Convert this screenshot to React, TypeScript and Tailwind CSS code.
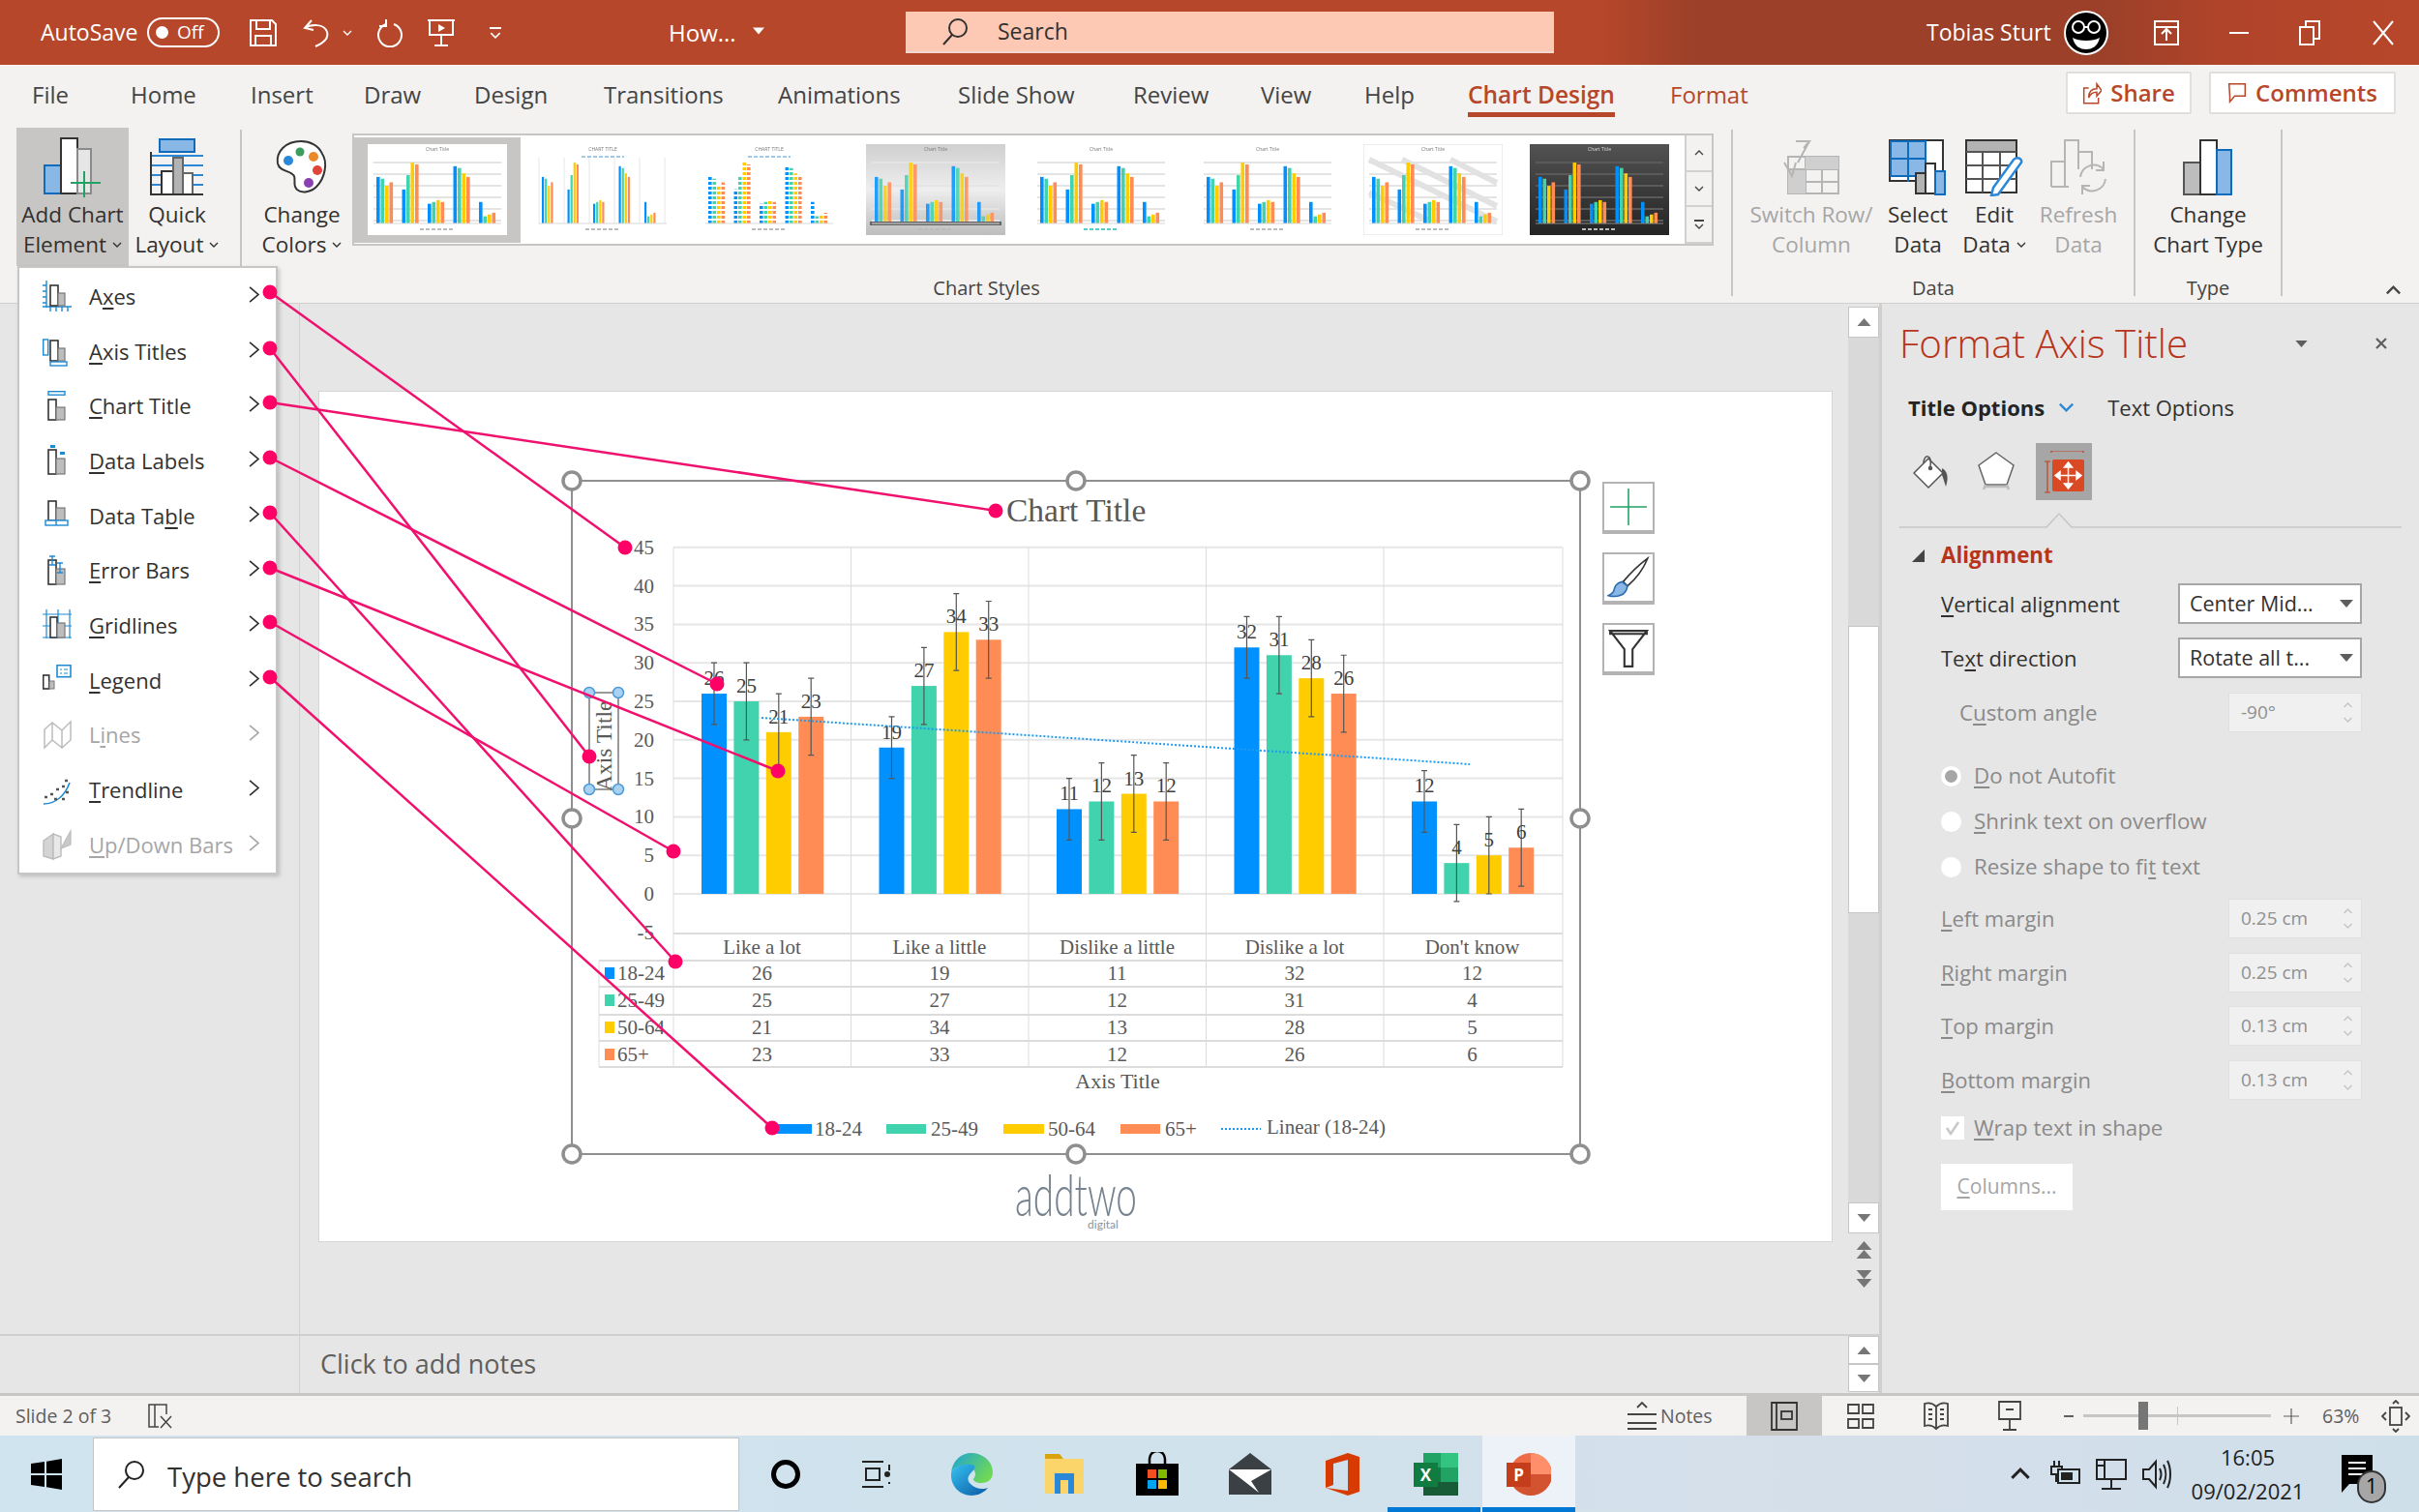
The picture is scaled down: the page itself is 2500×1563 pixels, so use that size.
import type { ReactNode } from "react";

// data behind the chart and the gallery thumbnails
const SERIES = ["18-24", "25-49", "50-64", "65+"];
const COLORS = ["#0091ff", "#41d2ae", "#ffcc00", "#ff8c55"];
const CATS = ["Like a lot", "Like a little", "Dislike a little", "Dislike a lot", "Don't know"];
const DATA = [
  [26, 25, 21, 23],
  [19, 27, 34, 33],
  [11, 12, 13, 12],
  [32, 31, 28, 26],
  [12, 4, 5, 6],
];
const CAT_X = [696, 879.5, 1063, 1246.5, 1430];

const TABS = [
  { label: "File", w: "w-[102px]" },
  { label: "Home", w: "w-[124px]" },
  { label: "Insert", w: "w-[117px]" },
  { label: "Draw", w: "w-[114px]" },
  { label: "Design", w: "w-[134px]" },
  { label: "Transitions", w: "w-[180px]" },
  { label: "Animations", w: "w-[186px]" },
  { label: "Slide Show", w: "w-[181px]" },
  { label: "Review", w: "w-[132px]" },
  { label: "View", w: "w-[107px]" },
  { label: "Help", w: "w-[107px]" },
];

const ANNOTATIONS = [
  [279, 302, 646, 566],
  [279, 360, 609, 782],
  [279, 416, 1029, 528],
  [279, 473, 741, 707],
  [279, 530, 698, 994],
  [279, 587, 804, 797],
  [279, 643, 696, 880],
  [279, 700, 798, 1166],
];

function Acc({ text, at }: { text: string; at: number }) {
  return (
    <>
      {text.slice(0, at)}
      <u className="underline-offset-[3px]">{text[at]}</u>
      {text.slice(at + 1)}
    </>
  );
}

function Tri({ className }: { className: string }) {
  return (
    <svg viewBox="0 0 14 8" className={className}>
      <path d="M0 0h14L7 8z" fill="currentColor" />
    </svg>
  );
}

function Chev({ className }: { className: string }) {
  return (
    <svg viewBox="0 0 10 6" className={className} fill="none" stroke="currentColor" strokeWidth="1.4">
      <path d="M1 1l4 4 4-4" />
    </svg>
  );
}

/* ---------- title bar icons ---------- */
function SaveIcon() {
  return (
    <svg viewBox="0 0 30 30" className="w-[30px] h-[30px]" fill="none" stroke="white" strokeWidth="2">
      <path d="M2 2h22l4 4v22H2z" />
      <path d="M8 2v9h14V2M7 28V18h16v10" />
    </svg>
  );
}
function UndoIcon() {
  return (
    <svg viewBox="0 0 30 30" className="w-[30px] h-[30px]" fill="none" stroke="white" strokeWidth="2">
      <path d="M10 2L3 10l9 2M3 10c6-4 20-5 23 4 2 7-5 12-12 15" />
    </svg>
  );
}
function RedoIcon() {
  return (
    <svg viewBox="0 0 30 30" className="w-[30px] h-[30px]" fill="none" stroke="white" strokeWidth="2">
      <path d="M11 6a12 12 0 1 0 8 0M11 1v7H4" />
    </svg>
  );
}
function PresentIcon() {
  return (
    <svg viewBox="0 0 30 30" className="w-[30px] h-[30px]" fill="none" stroke="white" strokeWidth="2">
      <path d="M1 2h28M3 2v15h24V2M15 17v11M8 28h14" />
      <path d="M12 6l7 4-7 4z" fill="white" stroke="none" />
    </svg>
  );
}
function Avatar() {
  return (
    <svg viewBox="0 0 46 46" className="w-[46px] h-[46px]">
      <circle cx="23" cy="23" r="22" fill="black" stroke="white" strokeWidth="2" />
      <g fill="none" stroke="white" strokeWidth="2">
        <circle cx="15" cy="17" r="6" />
        <circle cx="31" cy="17" r="6" />
        <path d="M21 17h4" />
      </g>
      <path d="M9 28c6 4 22 4 28 0-2 9-8 12-14 12S11 37 9 28z" fill="white" />
    </svg>
  );
}

/* ---------- ribbon icons ---------- */
function AddChartIcon() {
  return (
    <svg viewBox="0 0 60 62" className="w-[60px] h-[62px]">
      <rect x="1" y="29" width="17" height="29" fill="#8ab8e6" stroke="#0f6cbd" strokeWidth="2" />
      <rect x="18" y="1" width="17" height="57" fill="white" stroke="#333" strokeWidth="2" />
      <rect x="35" y="12" width="14" height="46" fill="#e6e6e6" stroke="#8a8a8a" strokeWidth="2" />
      <path d="M42 35v27M28 47h31" stroke="#21a366" strokeWidth="2" />
    </svg>
  );
}
function QuickLayoutIcon() {
  return (
    <svg viewBox="0 0 56 60" className="w-[56px] h-[60px]">
      <rect x="10" y="1" width="36" height="13" fill="#8ab8e6" stroke="#0f6cbd" strokeWidth="2" />
      <path d="M1 18h54M1 28h54M1 38h54M1 48h54" stroke="#2b88d8" strokeWidth="2" />
      <rect x="12" y="34" width="12" height="24" fill="white" stroke="#333" strokeWidth="2" />
      <rect x="24" y="20" width="10" height="38" fill="#b3b3b3" stroke="#666" strokeWidth="2" />
      <rect x="34" y="36" width="10" height="22" fill="white" stroke="#666" strokeWidth="2" />
      <path d="M1 14v44h54" stroke="#333" strokeWidth="2" fill="none" />
    </svg>
  );
}
function PaletteIcon() {
  return (
    <svg viewBox="0 0 56 56" className="w-[56px] h-[56px]">
      <path d="M27 1C11 1 1 12 3 24c2 9 14 7 17 13 2 5-2 9 3 14 5 4 14 3 20-3 9-9 12-25 6-34C45 5 36 1 27 1z" fill="white" stroke="#333" strokeWidth="2" />
      <circle cx="14" cy="21" r="5" fill="#2b88d8" />
      <circle cx="26" cy="12" r="4.5" fill="#3a9d5d" />
      <circle cx="40" cy="17" r="5" fill="#ea8a2b" />
      <circle cx="44" cy="31" r="5" fill="#e0453a" />
      <circle cx="35" cy="44" r="5" fill="#8b3fb0" />
    </svg>
  );
}
function SwitchIcon() {
  return (
    <svg viewBox="0 0 60 58" className="w-[60px] h-[58px]" fill="none" stroke="#b5b5b5" strokeWidth="2">
      <rect x="6" y="18" width="52" height="38" />
      <path d="M24 18v38M41 18v38M6 31h52M6 44h52" />
      <rect x="6" y="32" width="18" height="24" fill="#cfcfcf" stroke="none" />
      <rect x="24" y="18" width="34" height="13" fill="#cfcfcf" stroke="none" />
      <path d="M14 2h14L22 9M28 2L16 24M2 24l8 14 4-14" />
    </svg>
  );
}
function SelectDataIcon() {
  return (
    <svg viewBox="0 0 60 60" className="w-[60px] h-[60px]">
      <rect x="1" y="2" width="55" height="42" fill="white" stroke="#333" strokeWidth="2" />
      <rect x="2" y="3" width="36" height="36" fill="#8ab8e6" stroke="#0f6cbd" strokeWidth="2" />
      <path d="M20 3v42M2 21h36M2 39h36M38 3v40" stroke="#0f6cbd" strokeWidth="2" />
      <rect x="28" y="36" width="12" height="21" fill="#b3b3b3" stroke="#333" strokeWidth="2" />
      <rect x="38" y="26" width="10" height="31" fill="white" stroke="#333" strokeWidth="2" />
      <rect x="48" y="34" width="10" height="24" fill="#8ab8e6" stroke="#0f6cbd" strokeWidth="2" />
    </svg>
  );
}
function EditDataIcon() {
  return (
    <svg viewBox="0 0 60 60" className="w-[60px] h-[60px]">
      <rect x="1" y="2" width="52" height="54" fill="white" stroke="#333" strokeWidth="2" />
      <rect x="2" y="3" width="50" height="11" fill="#b3b3b3" />
      <path d="M1 14h52M1 28h52M1 42h52M18 14v42M36 14v42" stroke="#555" strokeWidth="2" />
      <path d="M50 22c5-4 9 0 8 3L34 58l-7 1 2-8z" fill="white" stroke="#2b88d8" strokeWidth="2.5" />
    </svg>
  );
}
function RefreshIcon() {
  return (
    <svg viewBox="0 0 60 60" className="w-[60px] h-[60px]" fill="none" stroke="#b5b5b5" strokeWidth="2">
      <path d="M2 50V24h14v26M16 50V2h14v30M30 14h14v18M2 50h18" />
      <path d="M32 40a14 14 0 0 1 24-8M58 42a14 14 0 0 1-24 8M56 24v9h-8M34 58v-9h8" />
    </svg>
  );
}
function ChangeTypeIcon() {
  return (
    <svg viewBox="0 0 52 58" className="w-[52px] h-[58px]">
      <rect x="1" y="24" width="17" height="33" fill="#bdbdbd" stroke="#555" strokeWidth="2" />
      <rect x="18" y="1" width="17" height="56" fill="white" stroke="#333" strokeWidth="2" />
      <rect x="35" y="11" width="15" height="46" fill="#8ab8e6" stroke="#0f6cbd" strokeWidth="2" />
    </svg>
  );
}

function RibbonButton({ icon, lines, w, active, off, caret }: { icon: ReactNode; lines: string[]; w: string; active?: boolean; off?: boolean; caret?: boolean }) {
  return (
    <div className={`${w} h-[143px] shrink-0 flex flex-col items-center pt-[7px] ${active ? "bg-[#c8c6c4]" : ""} ${off ? "text-[#a6a6a6]" : "text-[#323130]"}`}>
      <div className="h-[67px] flex items-center justify-center">{icon}</div>
      {lines.map((line, i) => (
        <div key={line} className="text-[22.5px] leading-[31px] whitespace-nowrap flex items-center gap-[6px]">
          {line}
          {caret && i === 1 && <Chev className="w-[10px] h-[6px]" />}
        </div>
      ))}
    </div>
  );
}

function ChartThumb({ variant }: { variant: number }) {
  const dark = variant === 7;
  const thin = variant === 1;
  const barW = thin ? 2.2 : 3.6;
  const bg = dark ? "#2e2e2e" : variant === 3 ? "url(#thumbGrey)" : "white";
  return (
    <svg viewBox="0 0 144 94" className="w-[144px] h-[94px] blur-[0.4px]">
      <defs>
        <linearGradient id="thumbGrey" x1="0" y1="0" x2="0" y2="1">
          <stop offset="0" stopColor="#cfcfcf" />
          <stop offset="0.5" stopColor="#eeeeee" />
          <stop offset="1" stopColor="#bdbdbd" />
        </linearGradient>
        <linearGradient id="thumbDark" x1="0" y1="0" x2="0" y2="1">
          <stop offset="0" stopColor="#525252" />
          <stop offset="1" stopColor="#242424" />
        </linearGradient>
      </defs>
      <rect x="0" y="0" width="144" height="94" fill={dark ? "url(#thumbDark)" : bg} stroke={variant === 6 ? "#dcdcdc" : "none"} />
      <text x="72" y="7" textAnchor="middle" fontSize="5" fill={dark ? "#ddd" : "#777"}>
        {variant === 1 || variant === 2 ? "CHART TITLE" : "Chart Title"}
      </text>
      {(variant === 1 || variant === 2) && <path d="M50 13h44" stroke="#9fc9e8" strokeWidth="2" strokeDasharray="4 2" />}
      {variant !== 1 && variant !== 2 && [19, 31, 43, 55, 67, 79].map((y) => (
        <path key={y} d={`M6 ${y}H138`} stroke={dark ? "#5a5a5a" : "#e4e4e4"} strokeWidth="2" />
      ))}
      {thin && [6, 32, 58, 84, 110, 136].map((x) => <path key={x} d={`M${x} 14V82`} stroke="#e6e6e6" />)}
      {variant === 6 && <path d="M6 16L138 80M40 16L138 64M6 50L70 80M90 16L138 40" stroke="#e2e2e2" strokeWidth="6" />}
      {DATA.map((group, g) =>
        group.map((v, s) => {
          const x = 9 + g * 26.5 + s * (barW + 0.9);
          const top = 82 - v * 1.85;
          if (variant === 2) {
            return <path key={`${g}-${s}`} d={`M${x + 1.8} 82V${top}`} stroke={COLORS[s]} strokeWidth={barW} strokeDasharray="3 2" />;
          }
          return <rect key={`${g}-${s}`} x={x} y={top} width={barW} height={v * 1.85} fill={COLORS[s]} opacity={variant === 3 ? 0.85 : 1} />;
        }),
      )}
      {variant === 3 && <rect x="4" y="80" width="136" height="4" fill="#666" />}
      <path d="M6 82H138" stroke={dark ? "#888" : "#d8d8d8"} />
      <path d="M54 88h36" stroke={variant === 4 ? "#5cc" : "#bbb"} strokeWidth="2" strokeDasharray="4 2" />
    </svg>
  );
}

function GalleryScroll({ children, h }: { children: ReactNode; h: string }) {
  return <div className={`${h} w-[28px] bg-[#f3f2f1] border-l-2 border-b-2 border-[#d2d0ce] flex items-center justify-center text-[#444]`}>{children}</div>;
}

/* ---------- chart inside the slide ---------- */
function Handle({ x, y }: { x: number; y: number }) {
  return <circle cx={x} cy={y} r="9" fill="white" stroke="#8f8f8f" strokeWidth="3.5" />;
}
function BlueHandle({ x, y }: { x: number; y: number }) {
  return <circle cx={x} cy={y} r="5.5" fill="#a9d1f2" stroke="#4d9ad8" strokeWidth="1.5" />;
}

function SlideChart() {
  const zero = 924;
  const unit = 7.96;
  return (
    <svg viewBox="330 405 1563 878" className="w-[1563px] h-[878px] [font-family:'Liberation_Serif',serif]">
      {[0, 1, 2, 3, 4, 5, 6, 7, 8, 9].map((i) => (
        <path key={i} d={`M696 ${zero - i * 39.8}H1615`} stroke="#e6e6e6" strokeWidth="2" />
      ))}
      {[...CAT_X, 1615].map((x) => (
        <path key={x} d={`M${x} 566V1103`} stroke="#dcdcdc" />
      ))}
      <path d="M619 993H1615M619 1020H1615M619 1049H1615M619 1076H1615M619 1103H1615M696 965H1615" stroke="#dcdcdc" strokeWidth="2" />
      <path d="M619 993V1103" stroke="#dcdcdc" />
      {[0, 1, 2, 3, 4, 5, 6, 7, 8, 9, -1].map((i) => (
        <text key={i} x="676" y={zero - i * 39.8 + 7} textAnchor="end" fontSize="21" fill="#595959">
          {i * 5}
        </text>
      ))}
      {DATA.map((group, g) =>
        group.map((v, s) => {
          const x = CAT_X[g] + 29 + s * 33.4;
          const top = zero - v * unit;
          const err = s === 0 ? 4 : 5;
          const cx = x + 13;
          const hi = zero - (v + err) * unit;
          const lo = zero - (v - err) * unit;
          return (
            <g key={`${g}-${s}`}>
              <rect x={x} y={top} width="26" height={v * unit} fill={COLORS[s]} />
              <path d={`M${cx} ${hi}V${lo}M${cx - 3} ${hi}h6M${cx - 3} ${lo}h6`} stroke="#555" strokeWidth="1.2" />
              <text x={cx} y={top - 9} textAnchor="middle" fontSize="21" fill="#404040">
                {v}
              </text>
            </g>
          );
        }),
      )}
      <path d="M787 742L1519 790" stroke="#1e9bf0" strokeWidth="2" strokeDasharray="2 2" />
      <text x="1040" y="539" fontSize="33.5" fill="#595959">
        Chart Title
      </text>
      {CATS.map((c, g) => (
        <text key={c} x={CAT_X[g] + 91.5} y="986" textAnchor="middle" fontSize="21" fill="#595959">
          {c}
        </text>
      ))}
      {SERIES.map((name, s) => (
        <g key={name}>
          <rect x="625" y={1000 + s * 28} width="10" height="12" fill={COLORS[s]} />
          <text x="638" y={1013 + s * 28} fontSize="21" fill="#595959">
            {name}
          </text>
          {DATA.map((group, g) => (
            <text key={g} x={CAT_X[g] + 91.5} y={1013 + s * 28} textAnchor="middle" fontSize="21" fill="#595959">
              {group[s]}
            </text>
          ))}
        </g>
      ))}
      <text x="1155" y="1125" textAnchor="middle" fontSize="22" fill="#595959">
        Axis Title
      </text>
      <rect x="801" y="1162" width="38" height="10" fill={COLORS[0]} />
      <text x="842" y="1174" fontSize="21" fill="#595959">18-24</text>
      <rect x="916" y="1162" width="41" height="10" fill={COLORS[1]} />
      <text x="962" y="1174" fontSize="21" fill="#595959">25-49</text>
      <rect x="1037" y="1162" width="42" height="10" fill={COLORS[2]} />
      <text x="1083" y="1174" fontSize="21" fill="#595959">50-64</text>
      <rect x="1158" y="1162" width="41" height="10" fill={COLORS[3]} />
      <text x="1204" y="1174" fontSize="21" fill="#595959">65+</text>
      <path d="M1262 1167H1303" stroke="#1e9bf0" strokeWidth="2" strokeDasharray="2 2" />
      <text x="1309" y="1172" fontSize="21" fill="#595959">Linear (18-24)</text>

      <rect x="609" y="716" width="30" height="100" fill="white" stroke="#9a9a9a" strokeWidth="2" />
      <text transform="translate(632 818) rotate(-90)" fontSize="23.5" fill="#595959">
        Axis Title
      </text>
      <BlueHandle x={609} y={716} />
      <BlueHandle x={639} y={716} />
      <BlueHandle x={609} y={816} />
      <BlueHandle x={639} y={816} />

      <rect x="591" y="497" width="1042" height="696" fill="none" stroke="#8f8f8f" strokeWidth="2" />
      <Handle x={591} y={497} />
      <Handle x={1112} y={497} />
      <Handle x={1633} y={497} />
      <Handle x={591} y={846} />
      <Handle x={1633} y={846} />
      <Handle x={591} y={1193} />
      <Handle x={1112} y={1193} />
      <Handle x={1633} y={1193} />

      <text x="1049" y="1257" fontSize="60" fontWeight="300" textLength="126" lengthAdjust="spacingAndGlyphs" fill="#76828f" className="[font-family:Lato,sans-serif]">
        addtwo
      </text>
      <text x="1140" y="1270" textAnchor="middle" fontSize="12" fill="#8a949e" className="[font-family:Lato,sans-serif]">
        digital
      </text>
    </svg>
  );
}

function ChartAction({ children }: { children: ReactNode }) {
  return <div className="w-[54px] h-[54px] bg-white border-2 border-[#b3b3b3] border-b-4 flex items-center justify-center">{children}</div>;
}

/* ---------- add chart element menu ---------- */
const bar = "#333";
function MenuBars({ x = 0 }: { x?: number }) {
  return (
    <>
      <rect x={x + 8} y="5" width="8" height="21" fill="white" stroke={bar} strokeWidth="1.6" />
      <rect x={x + 16} y="13" width="7" height="13" fill="#bdbdbd" stroke="#777" strokeWidth="1.2" />
    </>
  );
}
const MENU_ICONS: Record<string, ReactNode> = {
  axes: (
    <>
      <path d="M4 0v28M0 5h4M0 11h4M0 17h4M0 23h4M0 27h30M8 27v5M14 27v5M20 27v5M26 27v5" stroke="#1f8ad2" strokeWidth="1.4" fill="none" />
      <MenuBars />
    </>
  ),
  titles: (
    <>
      <rect x="0.7" y="4" width="5" height="16" fill="none" stroke="#1f8ad2" strokeWidth="1.4" />
      <MenuBars />
      <rect x="8" y="27" width="17" height="4" fill="none" stroke="#1f8ad2" strokeWidth="1.4" />
    </>
  ),
  chart: (
    <>
      <rect x="6" y="0.7" width="17" height="3.5" fill="none" stroke="#1f8ad2" strokeWidth="1.4" />
      <rect x="6" y="9" width="8" height="21" fill="white" stroke={bar} strokeWidth="1.6" />
      <rect x="14" y="17" width="9" height="13" fill="#bdbdbd" stroke="#777" strokeWidth="1.2" />
    </>
  ),
  labels: (
    <>
      <rect x="8" y="0" width="5" height="3" fill="#1f8ad2" />
      <rect x="18" y="7" width="5" height="3" fill="#1f8ad2" />
      <rect x="6" y="5" width="8" height="25" fill="white" stroke={bar} strokeWidth="1.6" />
      <rect x="14" y="14" width="9" height="16" fill="#bdbdbd" stroke="#777" strokeWidth="1.2" />
    </>
  ),
  table: (
    <>
      <rect x="6" y="1" width="8" height="20" fill="white" stroke={bar} strokeWidth="1.6" />
      <rect x="14" y="8" width="9" height="13" fill="#bdbdbd" stroke="#777" strokeWidth="1.2" />
      <rect x="3" y="21" width="23" height="5" fill="white" stroke="#1f8ad2" strokeWidth="1.4" />
      <path d="M14 21v5" stroke="#1f8ad2" strokeWidth="1.4" />
    </>
  ),
  errors: (
    <>
      <rect x="6" y="5" width="8" height="25" fill="white" stroke={bar} strokeWidth="1.6" />
      <rect x="14" y="14" width="9" height="16" fill="#bdbdbd" stroke="#777" strokeWidth="1.2" />
      <path d="M7 1h6M10 1v9M7 10h6M15 8h6M18 8v10M15 18h6" stroke="#1f8ad2" strokeWidth="1.4" fill="none" />
    </>
  ),
  grid: (
    <>
      <path d="M0 5h30M0 29h30M4 0v30M16 0v30M28 0v30M0 17h30" stroke="#1f8ad2" strokeWidth="1.2" fill="none" />
      <rect x="8" y="8" width="7" height="21" fill="white" stroke={bar} strokeWidth="1.6" />
      <rect x="15" y="14" width="8" height="15" fill="#bdbdbd" stroke="#777" strokeWidth="1.2" />
    </>
  ),
  legend: (
    <>
      <rect x="15" y="0.7" width="14" height="12" fill="white" stroke="#1f8ad2" strokeWidth="1.6" />
      <path d="M18 5h2M22 5h4M18 9h2M22 9h4" stroke="#1f8ad2" strokeWidth="1.2" />
      <rect x="0.7" y="11" width="6" height="14" fill="white" stroke={bar} strokeWidth="1.6" />
      <rect x="7" y="17" width="5" height="8" fill="#bdbdbd" stroke="#777" />
    </>
  ),
  lines: (
    <path d="M2 10l8-7 10 8 9-9v19l-9 8-10-8-8 8zM10 3v19M20 11v19" fill="none" stroke="#b5b5b5" strokeWidth="1.5" />
  ),
  trend: (
    <>
      <path d="M1 30c12 0 22-8 27-22" fill="none" stroke="#1f8ad2" strokeWidth="1.6" />
      <path d="M2 23h3M8 20h3M12 25h3M14 15h3M20 12h3M24 18h3M20 25h3M23 6h3" stroke="#555" strokeWidth="2.4" />
    </>
  ),
  updown: (
    <>
      <path d="M1 12l10-7v26l-10-3z" fill="#d0d0d0" stroke="#b5b5b5" strokeWidth="1.4" />
      <path d="M11 5v26l8-3V8z" fill="#e6e6e6" stroke="#b5b5b5" strokeWidth="1.4" />
      <path d="M19 20l10-18v14z" fill="#c4c4c4" stroke="#b5b5b5" strokeWidth="1.2" />
    </>
  ),
};
const MENU = [
  { icon: "axes", text: "Axes", at: 1 },
  { icon: "titles", text: "Axis Titles", at: 0 },
  { icon: "chart", text: "Chart Title", at: 0 },
  { icon: "labels", text: "Data Labels", at: 0 },
  { icon: "table", text: "Data Table", at: 7 },
  { icon: "errors", text: "Error Bars", at: 0 },
  { icon: "grid", text: "Gridlines", at: 0 },
  { icon: "legend", text: "Legend", at: 0 },
  { icon: "lines", text: "Lines", at: 1, off: true },
  { icon: "trend", text: "Trendline", at: 0 },
  { icon: "updown", text: "Up/Down Bars", at: 0, off: true },
];

/* ---------- format pane ---------- */
function SelectBox({ text }: { text: string }) {
  return (
    <div className="w-[190px] h-[42px] bg-white border-2 border-[#a6a6a6] flex items-center pl-[10px] pr-[7px] text-[#323130]">
      <span className="flex-1 text-[21.5px]">{text}</span>
      <Tri className="w-[14px] h-[8px] text-[#605e5c]" />
    </div>
  );
}
function Spinner({ text }: { text: string }) {
  return (
    <div className="w-[138px] h-[41px] bg-[#f0f0f0] border border-[#e0e0e0] flex items-center pl-[12px] pr-[8px] text-[19px] text-[#8f8f8f]">
      <span className="flex-1">{text}</span>
      <div className="flex flex-col gap-[9px] text-[#c4c4c4]">
        <Chev className="w-[11px] h-[6px] rotate-180" />
        <Chev className="w-[11px] h-[6px]" />
      </div>
    </div>
  );
}
function MarginRow({ text, at, value }: { text: string; at: number; value: string }) {
  return (
    <div className="h-[41px] flex items-center justify-between text-[22px] text-[#8a8a8a]">
      <span>
        <Acc text={text} at={at} />
      </span>
      <Spinner text={value} />
    </div>
  );
}
function Radio({ text, at, checked }: { text: string; at: number; checked?: boolean }) {
  return (
    <div className="h-[24px] flex items-center text-[22.3px] text-[#8a8a8a]">
      <span className="w-[21px] h-[21px] rounded-full bg-white flex items-center justify-center mr-[13px]">
        {checked && <span className="w-[13px] h-[13px] rounded-full bg-[#a6a6a6]" />}
      </span>
      <span>
        <Acc text={text} at={at} />
      </span>
    </div>
  );
}
function ScrollBtn({ down, h = "h-[32px]" }: { down?: boolean; h?: string }) {
  return (
    <div className={`w-[32px] ${h} bg-white border border-[#c8c6c4] flex items-center justify-center text-[#767676]`}>
      <Tri className={`w-[15px] h-[8px] ${down ? "" : "rotate-180"}`} />
    </div>
  );
}

/* ---------- taskbar icons ---------- */
function WindowsLogo() {
  return (
    <svg viewBox="0 0 32 32" className="w-[32px] h-[32px]">
      <path d="M0 5l14-2v12H0zM16 2.7L32 0v15H16zM0 17h14v12L0 27zM16 17h16v15l-16-2.700z" fill="black" />
    </svg>
  );
}
function EdgeIcon() {
  return (
    <svg viewBox="0 0 46 46" className="w-[46px] h-[46px]">
      <defs>
        <linearGradient id="edgeA" x1="0" y1="0" x2="1" y2="1">
          <stop offset="0" stopColor="#35c1f1" />
          <stop offset="1" stopColor="#0c59a4" />
        </linearGradient>
        <linearGradient id="edgeB" x1="0" y1="0" x2="1" y2="0.6">
          <stop offset="0" stopColor="#1ba3d8" />
          <stop offset="1" stopColor="#6fd854" />
        </linearGradient>
      </defs>
      <path d="M2 22C3 9 12 1 23 1c12 0 22 9 22 20 0 7-5 11-12 11-5 0-8-2-8-4 0-1 2-2 2-5 0-5-5-9-11-9-7 0-13 3-14 8z" fill="url(#edgeB)" />
      <path d="M2 22c-1 13 9 23 21 23 7 0 13-3 17-8-6 2-13 1-18-4-4-4-3-8 1-12 2-2 4-4 3-7-7-3-22 0-24 8z" fill="url(#edgeA)" />
    </svg>
  );
}
function FolderIcon() {
  return (
    <svg viewBox="0 0 44 46" className="w-[44px] h-[46px]">
      <path d="M2 2h15l4 5h-19z" fill="#d9a30f" />
      <rect x="2" y="7" width="40" height="36" rx="2" fill="#fbd569" />
      <path d="M12 22h20v21h-6V29h-8v14h-6z" fill="#2b88d8" />
    </svg>
  );
}
function StoreIcon() {
  return (
    <svg viewBox="0 0 46 46" className="w-[46px] h-[46px]">
      <path d="M15 12V7a8 8 0 0 1 16 0v5" fill="none" stroke="black" strokeWidth="2.500" />
      <rect x="1" y="12" width="44" height="33" fill="black" />
      <rect x="13" y="18" width="9" height="9" fill="#f25022" />
      <rect x="24" y="18" width="9" height="9" fill="#7fba00" />
      <rect x="13" y="29" width="9" height="9" fill="#00a4ef" />
      <rect x="24" y="29" width="9" height="9" fill="#ffb900" />
    </svg>
  );
}
function MailIcon() {
  return (
    <svg viewBox="0 0 46 46" className="w-[46px] h-[46px]">
      <path d="M1 18L23 1l22 17v26H1z" fill="#3b4045" />
      <path d="M1 18h44L24 30l8 12L18 31z" fill="white" />
    </svg>
  );
}
function OfficeIcon() {
  return (
    <svg viewBox="0 0 40 46" className="w-[40px] h-[46px]">
      <path d="M2 9L25 1l12 4v36l-12 4L2 37l23 3V8l-15 4v22l-8 3z" fill="#d83b01" />
    </svg>
  );
}
function ExcelIcon() {
  return (
    <svg viewBox="0 0 46 46" className="w-[46px] h-[46px]">
      <rect x="10" y="1" width="18" height="15" fill="#21a366" />
      <rect x="28" y="1" width="18" height="15" fill="#33c481" />
      <rect x="10" y="16" width="18" height="15" fill="#107c41" />
      <rect x="28" y="16" width="18" height="15" fill="#21a366" />
      <rect x="10" y="31" width="36" height="14" fill="#185c37" />
      <rect x="0" y="11" width="25" height="25" fill="#107c41" />
      <text x="12.500" y="30" textAnchor="middle" fontSize="17" fontWeight="700" fill="white">X</text>
    </svg>
  );
}
function PptIcon() {
  return (
    <svg viewBox="0 0 46 46" className="w-[46px] h-[46px]">
      <circle cx="25" cy="23" r="22" fill="#ed6c47" />
      <path d="M25 1a22 22 0 0 1 22 22H25z" fill="#ff8f6b" />
      <path d="M3 23h44a22 22 0 0 1-44 0z" fill="#d35230" />
      <rect x="0" y="11" width="25" height="25" fill="#c43e1c" />
      <text x="12.500" y="30" textAnchor="middle" fontSize="17" fontWeight="700" fill="white">P</text>
    </svg>
  );
}

export default function App() {
  return (
    <div className="relative w-[2500px] h-[1563px] overflow-hidden flex flex-col bg-[#e6e6e6] [font-family:'Open_Sans',sans-serif] text-[#323130]">
      {/* title bar */}
      <div className="h-[67px] shrink-0 flex items-center text-white bg-[linear-gradient(90deg,#b7472a_0%,#b7472a_66%,#9c4029_70%,#9c4029_87%,#b0442a_92%,#b7472a_100%)]">
        <span className="ml-[42px] w-[110px] text-[23px]">AutoSave</span>
        <div className="w-[75px] h-[31px] rounded-full border-2 border-white flex items-center pl-[7px] gap-[9px] text-[19px]">
          <span className="w-[13px] h-[13px] rounded-full bg-white" />
          Off
        </div>
        <div className="ml-[30px] w-[55px]"><SaveIcon /></div>
        <UndoIcon />
        <Chev className="ml-[12px] w-[10px] h-[6px]" />
        <div className="ml-[24px] w-[53px]"><RedoIcon /></div>
        <PresentIcon />
        <div className="ml-[34px] flex flex-col items-center gap-[3px] w-[14px]">
          <span className="w-[12px] h-[2px] bg-white" />
          <Chev className="w-[12px] h-[7px]" />
        </div>
        <span className="ml-[172px] w-[87px] text-[24px]">How...</span>
        <Tri className="w-[12px] h-[8px] mb-[4px]" />
        <div className="ml-[146px] w-[670px] h-[43px] bg-[#fdc9b5] border-b-2 border-[#f0d8cf] flex items-center text-[#323130] text-[23px]">
          <svg viewBox="0 0 30 30" className="ml-[36px] w-[30px] h-[30px]" fill="none" stroke="#323130" strokeWidth="2">
            <circle cx="18" cy="11" r="9" />
            <path d="M12 18L3 28" />
          </svg>
          <span className="ml-[29px]">Search</span>
        </div>
        <span className="ml-[385px] w-[142px] text-[23px] whitespace-nowrap">Tobias Sturt</span>
        <Avatar />
        <div className="ml-[47px] w-[75px]">
          <svg viewBox="0 0 26 26" className="w-[26px] h-[26px]" fill="none" stroke="white" strokeWidth="2">
            <path d="M1 1h24v24H1zM1 7h24M13 21V10M8 14l5-5 5 5" />
          </svg>
        </div>
        <div className="w-[75px] pl-[3px]"><span className="block w-[20px] h-[2px] bg-white" /></div>
        <div className="w-[76px]">
          <svg viewBox="0 0 22 26" className="w-[22px] h-[26px]" fill="none" stroke="white" strokeWidth="2">
            <path d="M1 7h14v18H1zM7 7V1h14v18h-6" />
          </svg>
        </div>
        <svg viewBox="0 0 22 26" className="w-[22px] h-[26px]" fill="none" stroke="white" strokeWidth="2">
          <path d="M1 1l20 24M21 1L1 25" />
        </svg>
      </div>

      {/* ribbon tabs */}
      <div className="h-[63px] shrink-0 bg-[#f3f2f1] flex pl-[33px] pt-[12px] text-[24px] text-[#444]">
        {TABS.map((t) => (
          <span key={t.label} className={`${t.w} leading-[38px]`}>
            {t.label}
          </span>
        ))}
        <span className="w-[209px] leading-[38px]">
          <span className="inline-block border-b-[5px] border-[#b7472a] font-semibold text-[#b7472a] leading-[37px] text-[24.5px] whitespace-nowrap">Chart Design</span>
        </span>
        <span className="w-[100px] leading-[38px] text-[#b7472a]">Format</span>
        <div className="ml-auto mr-[24px] flex gap-[18px] text-[24px] font-semibold text-[#b7472a] -mt-[5px]">
          <div className="w-[130px] h-[44px] bg-white border-2 border-[#e1dfdd] rounded-[2px] flex items-center justify-center gap-[9px]">
            <svg viewBox="0 0 24 28" className="w-[20px] h-[24px]" fill="none" stroke="#b7472a" strokeWidth="1.800">
              <path d="M8 8H2v19h18v-7M8 20c0-8 4-11 10-11V3l6 8-6 7v-5c-5 0-8 2-10 7z" />
            </svg>
            Share
          </div>
          <div className="w-[193px] h-[44px] bg-white border-2 border-[#e1dfdd] rounded-[2px] flex items-center justify-center gap-[9px]">
            <svg viewBox="0 0 24 26" className="w-[20px] h-[22px]" fill="none" stroke="#b7472a" strokeWidth="1.800">
              <path d="M2 2h20v15H9l-6 7v-7z" />
            </svg>
            Comments
          </div>
        </div>
      </div>

      {/* ribbon */}
      <div className="relative h-[183px] shrink-0 bg-[#f3f2f1] flex pt-[2px] pl-[17px]">
        <div className="w-[233px] shrink-0 h-[143px] flex items-start">
          <RibbonButton w="w-[116px]" active caret icon={<AddChartIcon />} lines={["Add Chart", "Element"]} />
          <RibbonButton w="w-[100px]" caret icon={<QuickLayoutIcon />} lines={["Quick", "Layout"]} />
          <div className="ml-[15px] w-[2px] h-[141px] mt-[2px] bg-[#c8c6c4]" />
        </div>

        <div className="w-[1541px] shrink-0 flex flex-col border-r-2 border-[#c8c6c4] h-[172px] mt-[2px]">
          <div className="flex h-[143px] -mt-[2px]">
            <RibbonButton w="w-[104px] ml-[10px]" caret icon={<PaletteIcon />} lines={["Change", "Colors"]} />
            <div className="w-[1407px] h-[116px] mt-[6px] bg-white border-2 border-[#c8c6c4] flex items-center">
              {[0, 1, 2, 3, 4, 5, 6, 7].map((v) => (
                <div key={v} className={`w-[171.6px] h-[109px] shrink-0 flex items-center justify-center ${v === 0 ? "bg-[#c8c6c4]" : ""}`}>
                  <ChartThumb variant={v} />
                </div>
              ))}
              <div className="ml-auto h-full flex flex-col">
                <GalleryScroll h="h-[38px]"><Chev className="w-[10px] h-[6px] rotate-180" /></GalleryScroll>
                <GalleryScroll h="h-[36px]"><Chev className="w-[10px] h-[6px]" /></GalleryScroll>
                <GalleryScroll h="h-[38px]">
                  <div className="flex flex-col items-center gap-[2px]">
                    <span className="w-[10px] h-[2px] bg-[#444]" />
                    <Chev className="w-[10px] h-[6px]" />
                  </div>
                </GalleryScroll>
              </div>
            </div>
          </div>
          <div className="text-center text-[20px] leading-[32px] text-[#444] mt-[7px]">Chart Styles</div>
        </div>

        <div className="w-[416px] shrink-0 flex flex-col border-r-2 border-[#c8c6c4] h-[172px] mt-[2px]">
          <div className="flex h-[143px] -mt-[2px] pl-[17px]">
            <RibbonButton w="w-[128px]" off icon={<SwitchIcon />} lines={["Switch Row/", "Column"]} />
            <RibbonButton w="w-[92px]" icon={<SelectDataIcon />} lines={["Select", "Data"]} />
            <RibbonButton w="w-[66px]" caret icon={<EditDataIcon />} lines={["Edit", "Data"]} />
            <RibbonButton w="w-[108px]" off icon={<RefreshIcon />} lines={["Refresh", "Data"]} />
          </div>
          <div className="text-center text-[20px] leading-[32px] text-[#444] mt-[7px]">Data</div>
        </div>

        <div className="w-[152px] shrink-0 flex flex-col border-r-2 border-[#c8c6c4] h-[172px] mt-[2px]">
          <div className="flex h-[143px] -mt-[2px] justify-center">
            <RibbonButton w="w-[130px]" icon={<ChangeTypeIcon />} lines={["Change", "Chart Type"]} />
          </div>
          <div className="text-center text-[20px] leading-[32px] text-[#444] mt-[7px]">Type</div>
        </div>
        <div className="flex-1 flex items-end justify-end pr-[18px] pb-[8px]">
          <Chev className="w-[17px] h-[10px] rotate-180 text-[#444]" />
        </div>
      </div>

      {/* slide area and format pane */}
      <div className="h-[1130px] shrink-0 flex border-b-[3px] border-[#c8c6c4] border-t border-t-[#d2d0ce]">
        <div className="w-[1944px] shrink-0 flex flex-col">
          <div className="h-[1065px] flex">
            <div className="w-[310px] shrink-0 border-r border-[#d2d0ce]" />
            <div className="w-[1600px] shrink-0 pl-[20px] pt-[91px]">
              <div className="relative w-[1563px] h-[878px] bg-white outline outline-[#d6d6d6]">
                <SlideChart />
                <div className="absolute left-[1326px] top-[93px] flex flex-col gap-[19px]">
                  <ChartAction>
                    <svg viewBox="0 0 40 40" className="w-[42px] h-[42px]" fill="none" stroke="#21a366" strokeWidth="1.500">
                      <path d="M20 2v36M2 20h36" />
                    </svg>
                  </ChartAction>
                  <ChartAction>
                    <svg viewBox="0 0 40 40" className="w-[44px] h-[44px]">
                      <path d="M38 2C30 8 20 18 15 24l4 4C26 22 34 12 38 2z" fill="white" stroke="#333" strokeWidth="1.500" />
                      <path d="M14 24c-6 1-7 5-8 9-1 2-3 3-5 4 8 2 17 0 18-9z" fill="#8ab8e6" stroke="#2b6cb0" strokeWidth="1.500" />
                    </svg>
                  </ChartAction>
                  <ChartAction>
                    <svg viewBox="0 0 40 40" className="w-[42px] h-[42px]" fill="none" stroke="#333" strokeWidth="2">
                      <path d="M2 3h36L24 21v17h-8V21zM2 3v3h36V3" />
                    </svg>
                  </ChartAction>
                </div>
              </div>
            </div>
            <div className="w-[34px] shrink-0 pt-[3px] flex flex-col items-center bg-[#e6e6e6] border-r-2 border-[#d2d0ce]">
              <ScrollBtn />
              <div className="w-[32px] h-[298px] bg-[#d9d9d9]" />
              <div className="w-[32px] h-[297px] bg-white border border-[#c8c6c4]" />
              <div className="w-[32px] h-[299px] bg-[#d9d9d9]" />
              <ScrollBtn down />
              <div className="mt-[8px] flex flex-col items-center text-[#767676]">
                <Tri className="w-[17px] h-[9px] rotate-180" />
                <Tri className="w-[17px] h-[9px] rotate-180" />
                <div className="h-[12px]" />
                <Tri className="w-[17px] h-[9px]" />
                <Tri className="w-[17px] h-[9px]" />
              </div>
            </div>
          </div>
          {/* notes */}
          <div className="h-[61px] flex border-t-2 border-[#d2d0ce]">
            <div className="w-[310px] shrink-0 border-r border-[#d2d0ce]" />
            <div className="w-[1600px] shrink-0 pl-[21px] flex items-center text-[27px] text-[#605e5c]">Click to add notes</div>
            <div className="w-[34px] shrink-0 flex flex-col border-r-2 border-[#d2d0ce]">
              <ScrollBtn h="h-[29px]" />
              <ScrollBtn down h="h-[29px]" />
            </div>
          </div>
        </div>

        {/* format axis title pane */}
        <div className="w-[556px] shrink-0 border-l border-[#d2d0ce]">
          <div className="mt-[17px] h-[48px] flex items-center pl-[18px] pr-[33px] text-[#b7341a]">
            <span className="text-[40.3px] font-light leading-[48px] flex-1 whitespace-nowrap">Format Axis Title</span>
            <Tri className="w-[13px] h-[7px] text-[#605e5c] mr-[70px]" />
            <svg viewBox="0 0 12 12" className="w-[12px] h-[12px]" fill="none" stroke="#605e5c" strokeWidth="2.200">
              <path d="M1 1l10 10M11 1L1 11" />
            </svg>
          </div>
          <div className="mt-[26px] h-[32px] flex items-center pl-[27px] text-[22px]">
            <span className="font-bold text-[#252423] whitespace-nowrap">Title Options</span>
            <Chev className="ml-[13px] w-[19px] h-[10px] text-[#2b88d8]" />
            <span className="ml-[33px]">Text Options</span>
          </div>
          <div className="mt-[21px] h-[59px] flex items-center pl-[32px]">
            <svg viewBox="0 0 38 38" className="w-[38px] h-[38px]" fill="none" stroke="#555" strokeWidth="1.500">
              <path d="M1 20L16 5l15 15-15 15z" fill="white" />
              <path d="M11 10c0-10 9-10 7 3" />
              <circle cx="18" cy="15" r="1.500" fill="#555" />
              <path d="M30 15c6 3 7 10 4 19-2-6-3-10-4-12z" fill="#555" stroke="none" />
            </svg>
            <svg viewBox="0 0 38 42" className="ml-[29px] w-[38px] h-[42px]" fill="none" stroke="#666" strokeWidth="1.500">
              <path d="M19 1l18 13-7 20H8L1 14z" fill="white" />
              <path d="M8 34l-2 5M30 34l2 5M6 36h26" stroke="#bdbdbd" strokeWidth="2.500" />
            </svg>
            <div className="ml-[22px] w-[58px] h-[59px] bg-[#a6a6a6] flex items-center justify-center">
              <svg viewBox="0 0 42 44" className="w-[42px] h-[44px]">
                <path d="M8 3h33M8 1v4M41 1v4M1 14h6M1 46h6M4 14v32" transform="translate(0 -3)" stroke="#c43e1c" strokeWidth="1.200" fill="none" />
                <rect x="9" y="9" width="33" height="33" rx="2" fill="#d84924" />
                <path d="M25.500 13v25M13 25.500h25M25.500 12l-4 5h8zM25.500 39l-4-5h8zM12 25.500l5-4v8zM39 25.500l-5-4v8z" stroke="white" strokeWidth="1.500" fill="white" />
              </svg>
            </div>
          </div>
          {/* divider with the notch under the active icon */}
          <div className="mt-[12px] ml-[18px]">
            <svg viewBox="0 0 519 17" className="w-[519px] h-[17px]" fill="none" stroke="#c8c6c4" strokeWidth="1.500">
              <path d="M0 16H152L165 2l13 14H519" />
            </svg>
          </div>
          <div className="mt-[12px] h-[32px] flex items-center pl-[31px]">
            <svg viewBox="0 0 12 12" className="w-[13px] h-[13px]"><path d="M12 0v12H0z" fill="#444" /></svg>
            <span className="ml-[17px] text-[22.3px] font-bold text-[#b7341a]">Alignment</span>
          </div>
          <div className="mt-[13px] pl-[61px] pr-[59px] flex flex-col">
            <div className="h-[42px] flex items-center justify-between text-[22px]">
              <span><Acc text="Vertical alignment" at={0} /></span>
              <SelectBox text="Center Mid..." />
            </div>
            <div className="mt-[14px] h-[42px] flex items-center justify-between text-[22px]">
              <span><Acc text="Text direction" at={2} /></span>
              <SelectBox text="Rotate all t..." />
            </div>
            <div className="mt-[15px] h-[41px] flex items-center justify-between text-[22.3px] text-[#8a8a8a] pl-[19px]">
              <span><Acc text="Custom angle" at={1} /></span>
              <Spinner text="-90°" />
            </div>
            <div className="mt-[33px] flex flex-col gap-[23px]">
              <Radio text="Do not Autofit" at={0} checked />
              <Radio text="Shrink text on overflow" at={0} />
              <Radio text="Resize shape to fit text" at={18} />
            </div>
            <div className="mt-[21px] flex flex-col gap-[14.500px]">
              <MarginRow text="Left margin" at={0} value="0.25 cm" />
              <MarginRow text="Right margin" at={0} value="0.25 cm" />
              <MarginRow text="Top margin" at={0} value="0.13 cm" />
              <MarginRow text="Bottom margin" at={0} value="0.13 cm" />
            </div>
            <div className="mt-[17px] h-[24px] flex items-center text-[22.3px] text-[#8a8a8a]">
              <span className="w-[24px] h-[24px] bg-white flex items-center justify-center mr-[10px]">
                <svg viewBox="0 0 16 16" className="w-[16px] h-[16px]" fill="none" stroke="#c8c8c8" strokeWidth="2.500">
                  <path d="M2 8l4 6 8-12" />
                </svg>
              </span>
              <span><Acc text="Wrap text in shape" at={0} /></span>
            </div>
            <div className="mt-[25px] w-[136px] h-[48px] bg-white flex items-center justify-center text-[21px] text-[#a6a6a6]">
              <span><Acc text="Columns..." at={0} /></span>
            </div>
          </div>
        </div>
      </div>

      {/* status bar */}
      <div className="h-[41px] shrink-0 bg-[#f3f2f1] flex items-center text-[19.5px] text-[#605e5c]">
        <span className="ml-[16px]">Slide 2 of 3</span>
        <svg viewBox="0 0 28 28" className="ml-[37px] w-[28px] h-[28px]" fill="none" stroke="#444" strokeWidth="1.500">
          <path d="M20 12V2H2v23h10M8 2v23M14 14l11 12M25 14L14 26" />
        </svg>
        <div className="ml-auto flex items-center h-full pr-[9px]">
          <svg viewBox="0 0 32 32" className="w-[32px] h-[34px]" fill="none" stroke="#444" strokeWidth="1.800">
            <path d="M11 7l5-5 5 5M1 14h30M1 23h30M1 29h30" />
          </svg>
          <span className="ml-[3px] w-[89px]">Notes</span>
          <div className="w-[78px] h-full bg-[#c8c6c4] flex items-center justify-center">
            <svg viewBox="0 0 28 30" className="w-[28px] h-[30px]" fill="none" stroke="#333" strokeWidth="1.800">
              <path d="M1 1h26v28H1zM6 1v28" />
              <rect x="11" y="10" width="11" height="8" />
            </svg>
          </div>
          <div className="w-[80px] flex justify-center">
            <svg viewBox="0 0 28 28" className="w-[28px] h-[28px]" fill="none" stroke="#444" strokeWidth="1.800">
              <path d="M1 2h11v9H1zM16 2h11v9H16zM1 17h11v9H1zM16 17h11v9H16z" />
            </svg>
          </div>
          <div className="w-[76px] flex justify-center">
            <svg viewBox="0 0 28 32" className="w-[28px] h-[32px]" fill="none" stroke="#444" strokeWidth="1.800">
              <path d="M14 6C10 2 5 2 2 3v23c3-1 8-1 12 3 4-4 9-4 12-3V3c-3-1-8-1-12 3zM14 6v23M6 9h4M6 14h4M6 19h4M18 9h4M18 14h4M18 19h4" />
            </svg>
          </div>
          <div className="w-[76px] flex justify-center">
            <svg viewBox="0 0 28 32" className="w-[28px] h-[32px]" fill="none" stroke="#444" strokeWidth="1.800">
              <path d="M3 1h22v18H3zM14 19v11M7 30h14M10 9h8" />
            </svg>
          </div>
          <span className="ml-[18px] w-[10px] h-[2px] bg-[#605e5c]" />
          <div className="relative ml-[10px] w-[194px] h-[3px] bg-[#c8c6c4]">
            <span className="absolute left-[57px] -top-[13px] w-[10px] h-[29px] bg-[#767676]" />
            <span className="absolute left-[97px] -top-[8px] w-px h-[19px] bg-[#c8c6c4]" />
          </div>
          <svg viewBox="0 0 16 16" className="ml-[13px] w-[16px] h-[16px]" stroke="#605e5c" strokeWidth="1.200">
            <path d="M8 0v16M0 8h16" />
          </svg>
          <span className="ml-[24px] w-[61px]">63%</span>
          <svg viewBox="0 0 30 34" className="w-[30px] h-[34px]" fill="none" stroke="#444" strokeWidth="1.800">
            <rect x="9" y="8" width="12" height="18" />
            <path d="M12 4l3-3 3 3M12 30l3 3 3-3M5 13l-4 4 4 4M25 13l4 4-4 4" />
          </svg>
        </div>
      </div>

      {/* taskbar */}
      <div className="h-[79px] shrink-0 flex bg-[linear-gradient(90deg,#cfe4ef_0%,#d0e2ec_50%,#d5dfea_75%,#cfdfea_100%)]">
        <div className="w-[96px] shrink-0 flex items-center justify-center"><WindowsLogo /></div>
        <div className="w-[668px] shrink-0 h-[76px] mt-[2px] bg-white border border-[#c8c6c4] flex items-center text-[27.5px] text-[#323130]">
          <svg viewBox="0 0 30 30" className="ml-[24px] w-[30px] h-[30px]" fill="none" stroke="#222" strokeWidth="2">
            <circle cx="18" cy="11" r="9" />
            <path d="M12 18L2 29" />
          </svg>
          <span className="ml-[22px] mt-[5px]">Type here to search</span>
        </div>
        <div className="w-[96px] flex items-center justify-center">
          <span className="w-[30px] h-[30px] rounded-full border-[5px] border-black" />
        </div>
        <div className="w-[96px] flex items-center justify-center pr-[6px]">
          <svg viewBox="0 0 32 32" className="w-[32px] h-[32px]" fill="none" stroke="#222" strokeWidth="2">
            <path d="M2 3h22M2 29h22M6 10h14v12H6zM30 6v6M30 24v2" />
            <circle cx="28" cy="16" r="3" fill="#222" stroke="none" />
          </svg>
        </div>
        <div className="w-[96px] flex items-center justify-center"><EdgeIcon /></div>
        <div className="w-[96px] flex items-center justify-center"><FolderIcon /></div>
        <div className="w-[96px] flex items-center justify-center"><StoreIcon /></div>
        <div className="w-[96px] flex items-center justify-center"><MailIcon /></div>
        <div className="w-[96px] flex items-center justify-center"><OfficeIcon /></div>
        <div className="relative w-[96px] flex items-center justify-center">
          <ExcelIcon />
          <span className="absolute left-[-2px] right-[2px] bottom-0 h-[5px] bg-[#0078d4]" />
        </div>
        <div className="relative w-[96px] flex items-center justify-center bg-[#edf2f8]">
          <PptIcon />
          <span className="absolute inset-x-0 bottom-0 h-[5px] bg-[#0078d4]" />
        </div>
        <div className="ml-auto flex items-center pr-[22px]">
          <div className="w-[47px] flex justify-center"><Chev className="w-[22px] h-[13px] rotate-180 text-[#222]" /></div>
          <div className="w-[47px] flex justify-center">
            <svg viewBox="0 0 32 30" className="w-[32px] h-[30px]" fill="none" stroke="#222" strokeWidth="2">
              <path d="M4 1v6M9 1v6M1 7h11v8H1zM6 15v8" />
              <rect x="8" y="10" width="22" height="14" fill="#d0e2ec" />
              <rect x="11" y="13" width="12" height="8" fill="#222" stroke="none" />
            </svg>
          </div>
          <div className="w-[47px] flex justify-center">
            <svg viewBox="0 0 32 34" className="w-[32px] h-[34px]" fill="none" stroke="#222" strokeWidth="2">
              <path d="M1 2h30v20H1zM9 2v20M16 22v10M6 32h20M1 8h8" />
            </svg>
          </div>
          <div className="w-[47px] flex justify-center">
            <svg viewBox="0 0 30 34" className="w-[30px] h-[34px]" fill="none" stroke="#222" strokeWidth="2">
              <path d="M1 12h6l7-8v26l-7-8H1zM18 11c2 4 2 8 0 12M22 7c3 6 3 14 0 20M26 3c4 8 4 20 0 28" />
            </svg>
          </div>
          <div className="w-[142px] flex flex-col items-center text-[22px] leading-[35px] text-[#222]">
            <span>16:05</span>
            <span>09/02/2021</span>
          </div>
          <div className="relative w-[84px] flex justify-center">
            <svg viewBox="0 0 32 40" className="w-[32px] h-[40px]">
              <path d="M0 0h32v30H8l-8 9z" fill="black" />
              <path d="M7 8h18M7 14h18M7 20h18" stroke="white" strokeWidth="2" />
            </svg>
            <span className="absolute left-[42px] top-[16px] w-[30px] h-[34px] rounded-full bg-[#a6a6a6] border-2 border-[#333] flex items-center justify-center text-[21px] text-black">1</span>
          </div>
        </div>
      </div>

      {/* add chart element menu, open over the ribbon */}
      <div className="absolute left-[18px] top-[275px] w-[269px] h-[629px] bg-white border-2 border-[#c8c6c4] shadow-[2px_2px_4px_rgba(0,0,0,0.18)] pt-[1px]">
        {MENU.map((m) => (
          <div key={m.text} className={`h-[56.700px] flex items-center text-[22px] ${m.off ? "text-[#a6a6a6]" : "text-[#323130]"}`}>
            <svg viewBox="0 0 32 32" className={`ml-[24px] w-[32px] h-[32px] ${m.off ? "opacity-90" : ""}`}>
              {MENU_ICONS[m.icon]}
            </svg>
            <span className="ml-[16px] flex-1 whitespace-nowrap">
              <Acc text={m.text} at={m.at} />
            </span>
            <svg viewBox="0 0 10 16" className="mr-[17px] w-[11px] h-[19px] -mt-[4px]" fill="none" stroke={m.off ? "#a6a6a6" : "#323130"} strokeWidth="1.500">
              <path d="M1 1l8 7-8 7" />
            </svg>
          </div>
        ))}
      </div>

      {/* pink callouts drawn across the whole window */}
      <svg viewBox="0 0 2500 1563" className="absolute inset-0 w-[2500px] h-[1563px] pointer-events-none">
        {ANNOTATIONS.map(([x1, y1, x2, y2]) => (
          <g key={`${y1}`}>
            <path d={`M${x1} ${y1}L${x2} ${y2}`} stroke="#f0106e" strokeWidth="2.500" />
            <circle cx={x1} cy={y1} r="7.500" fill="#ff0066" />
            <circle cx={x2} cy={y2} r="7.500" fill="#ff0066" />
          </g>
        ))}
      </svg>
    </div>
  );
}
